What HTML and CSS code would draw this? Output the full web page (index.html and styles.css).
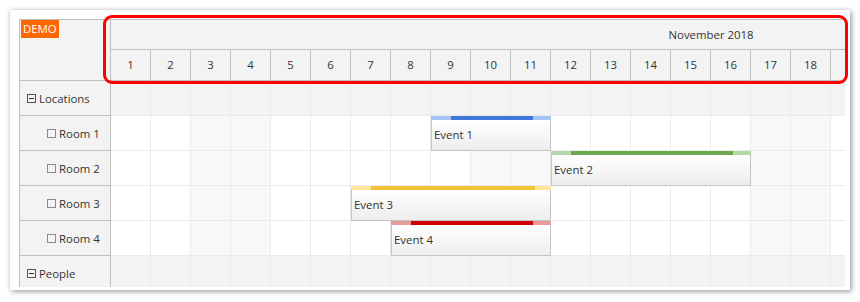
FILE: index.html
```html
<!DOCTYPE html>
<html>
<head>
<meta charset="utf-8">
<title>Scheduler</title>
<link rel="stylesheet" href="styles.css">
</head>
<body>
<div class="frame">
  <div class="scheduler">
    <div class="head">
      <div class="corner"><span class="demo">DEMO</span></div>
      <div class="timeheader">
        <div class="months"><div class="month">November 2018</div></div>
        <div class="days">
          <div class="day">1</div><div class="day">2</div><div class="day">3</div><div class="day">4</div><div class="day">5</div><div class="day">6</div><div class="day">7</div><div class="day">8</div><div class="day">9</div><div class="day">10</div><div class="day">11</div><div class="day">12</div><div class="day">13</div><div class="day">14</div><div class="day">15</div><div class="day">16</div><div class="day">17</div><div class="day">18</div><div class="day"></div>
        </div>
      </div>
    </div>

    <div class="row parent">
      <div class="rh"><span class="tog minus"></span>Locations</div>
      <div class="cells">
        <span class="c"></span><span class="c"></span><span class="c"></span><span class="c"></span><span class="c"></span><span class="c"></span><span class="c"></span><span class="c"></span><span class="c"></span><span class="c"></span><span class="c"></span><span class="c"></span><span class="c"></span><span class="c"></span><span class="c"></span><span class="c"></span><span class="c"></span><span class="c"></span><span class="c"></span>
      </div>
    </div>

    <div class="row child">
      <div class="rh"><span class="tog"></span>Room 1</div>
      <div class="cells">
        <span class="c"></span><span class="c"></span><span class="c we"></span><span class="c we"></span><span class="c"></span><span class="c"></span><span class="c"></span><span class="c"></span><span class="c"></span><span class="c we"></span><span class="c we"></span><span class="c"></span><span class="c"></span><span class="c"></span><span class="c"></span><span class="c"></span><span class="c we"></span><span class="c we"></span><span class="c"></span>
        <div class="event blue" style="left:320px;width:120px">
          <div class="bar"><div class="bar-in" style="left:20px;width:82px"></div></div>
          <div class="ebody">Event 1</div>
        </div>
      </div>
    </div>

    <div class="row child">
      <div class="rh"><span class="tog"></span>Room 2</div>
      <div class="cells">
        <span class="c"></span><span class="c"></span><span class="c we"></span><span class="c we"></span><span class="c"></span><span class="c"></span><span class="c"></span><span class="c"></span><span class="c"></span><span class="c we"></span><span class="c we"></span><span class="c"></span><span class="c"></span><span class="c"></span><span class="c"></span><span class="c"></span><span class="c we"></span><span class="c we"></span><span class="c"></span>
        <div class="event green" style="left:440px;width:200px">
          <div class="bar"><div class="bar-in" style="left:20px;width:162px"></div></div>
          <div class="ebody">Event 2</div>
        </div>
      </div>
    </div>

    <div class="row child">
      <div class="rh"><span class="tog"></span>Room 3</div>
      <div class="cells">
        <span class="c"></span><span class="c"></span><span class="c we"></span><span class="c we"></span><span class="c"></span><span class="c"></span><span class="c"></span><span class="c"></span><span class="c"></span><span class="c we"></span><span class="c we"></span><span class="c"></span><span class="c"></span><span class="c"></span><span class="c"></span><span class="c"></span><span class="c we"></span><span class="c we"></span><span class="c"></span>
        <div class="event yellow" style="left:240px;width:200px">
          <div class="bar"><div class="bar-in" style="left:20px;width:164px"></div></div>
          <div class="ebody">Event 3</div>
        </div>
      </div>
    </div>

    <div class="row child">
      <div class="rh"><span class="tog"></span>Room 4</div>
      <div class="cells">
        <span class="c"></span><span class="c"></span><span class="c we"></span><span class="c we"></span><span class="c"></span><span class="c"></span><span class="c"></span><span class="c"></span><span class="c"></span><span class="c we"></span><span class="c we"></span><span class="c"></span><span class="c"></span><span class="c"></span><span class="c"></span><span class="c"></span><span class="c we"></span><span class="c we"></span><span class="c"></span>
        <div class="event red" style="left:280px;width:160px">
          <div class="bar"><div class="bar-in" style="left:20px;width:122px"></div></div>
          <div class="ebody">Event 4</div>
        </div>
      </div>
    </div>

    <div class="row parent">
      <div class="rh"><span class="tog minus"></span>People</div>
      <div class="cells">
        <span class="c"></span><span class="c"></span><span class="c"></span><span class="c"></span><span class="c"></span><span class="c"></span><span class="c"></span><span class="c"></span><span class="c"></span><span class="c"></span><span class="c"></span><span class="c"></span><span class="c"></span><span class="c"></span><span class="c"></span><span class="c"></span><span class="c"></span><span class="c"></span><span class="c"></span>
      </div>
    </div>
  </div>
  <div class="highlight"></div>
</div>
</body>
</html>
```

FILE: styles.css
```css
html, body {
  margin: 0;
  padding: 0;
  background: #ffffff;
}

body {
  font-family: "Open Sans", "Noto Sans", sans-serif;
  font-size: 11.4px;
  color: #333333;
}

.frame {
  position: relative;
  margin: 10px;
  width: 840px;
  height: 280px;
  box-sizing: border-box;
  padding: 9px 5px 3px 9px;
  background: #ffffff;
  box-shadow: 0 0 5px rgba(0, 0, 0, 0.18), 2px 2px 5px rgba(0, 0, 0, 0.28);
}

.scheduler {
  width: 826px;
  height: 268px;
  box-sizing: border-box;
  overflow: hidden;
  border-top: 1px solid #c0c0c0;
  border-left: 1px solid #c0c0c0;
}

.head {
  display: flex;
  height: 61px;
  box-sizing: border-box;
  border-bottom: 1px solid #c0c0c0;
}

.corner {
  flex: none;
  width: 91px;
  box-sizing: border-box;
  border-right: 1px solid #c0c0c0;
  background: #f3f3f3;
  padding: 0 0 0 1px;
}

.demo {
  display: inline-block;
  height: 18px;
  line-height: 18px;
  padding: 0 2px;
  background: #ff6600;
  color: #ffffff;
}

.timeheader {
  flex: 1;
  min-width: 0;
  overflow: hidden;
  background: #f3f3f3;
}

.months {
  display: flex;
  height: 30px;
  box-sizing: border-box;
  border-bottom: 1px solid #c0c0c0;
}

.month {
  flex: none;
  width: 1200px;
  text-align: center;
  line-height: 29px;
}

.days {
  display: flex;
  height: 30px;
}

.day {
  flex: none;
  width: 40px;
  box-sizing: border-box;
  border-right: 1px solid #c0c0c0;
  text-align: center;
  line-height: 30px;
}

.row {
  display: flex;
  height: 35px;
}

.rh {
  flex: none;
  width: 91px;
  height: 35px;
  box-sizing: border-box;
  border-right: 1px solid #c0c0c0;
  border-bottom: 1px solid #c0c0c0;
  background: #f3f3f3;
  display: flex;
  align-items: center;
  padding-left: 7px;
  white-space: nowrap;
}

.child .rh {
  padding-left: 27px;
}

.tog {
  flex: none;
  position: relative;
  width: 9px;
  height: 9px;
  box-sizing: border-box;
  border: 1px solid #8a8a8a;
  margin-right: 3px;
}

.tog.minus {
  border-color: #555555;
}

.tog.minus::after {
  content: "";
  position: absolute;
  left: 1px;
  right: 1px;
  top: 3px;
  height: 1px;
  background: #333333;
}

.cells {
  flex: none;
  position: relative;
  display: flex;
}

.c {
  flex: none;
  width: 40px;
  height: 35px;
  box-sizing: border-box;
  border-right: 1px solid #ebebeb;
  border-bottom: 1px solid #ebebeb;
  background: #ffffff;
}

.c.we {
  background: #f8f8f8;
}

.parent .c {
  background: #f3f3f3;
  border-color: #e9e9e9;
}

.event {
  position: absolute;
  top: 0;
  height: 35px;
  display: flex;
  flex-direction: column;
  z-index: 2;
}

.bar {
  position: relative;
  flex: none;
  height: 4px;
}

.bar-in {
  position: absolute;
  top: 0;
  bottom: 0;
}

.ebody {
  flex: 1;
  box-sizing: border-box;
  border: 1px solid #c4c4c4;
  border-top: none;
  background: linear-gradient(#ffffff, #ededed);
  display: flex;
  align-items: center;
  padding: 0 0 1px 2px;
  white-space: nowrap;
  overflow: hidden;
}

.blue .bar { background: #a4c2f4; }
.blue .bar-in { background: #3c78d8; }
.green .bar { background: #b6d7a8; }
.green .bar-in { background: #6aa84f; }
.yellow .bar { background: #ffe599; }
.yellow .bar-in { background: #f1c232; }
.red .bar { background: #ea9999; }
.red .bar-in { background: #cc0000; }

.highlight {
  position: absolute;
  left: 93px;
  top: 5px;
  width: 745px;
  height: 69px;
  box-sizing: border-box;
  border: 3px solid #ff0000;
  border-radius: 9px;
  pointer-events: none;
}
```
